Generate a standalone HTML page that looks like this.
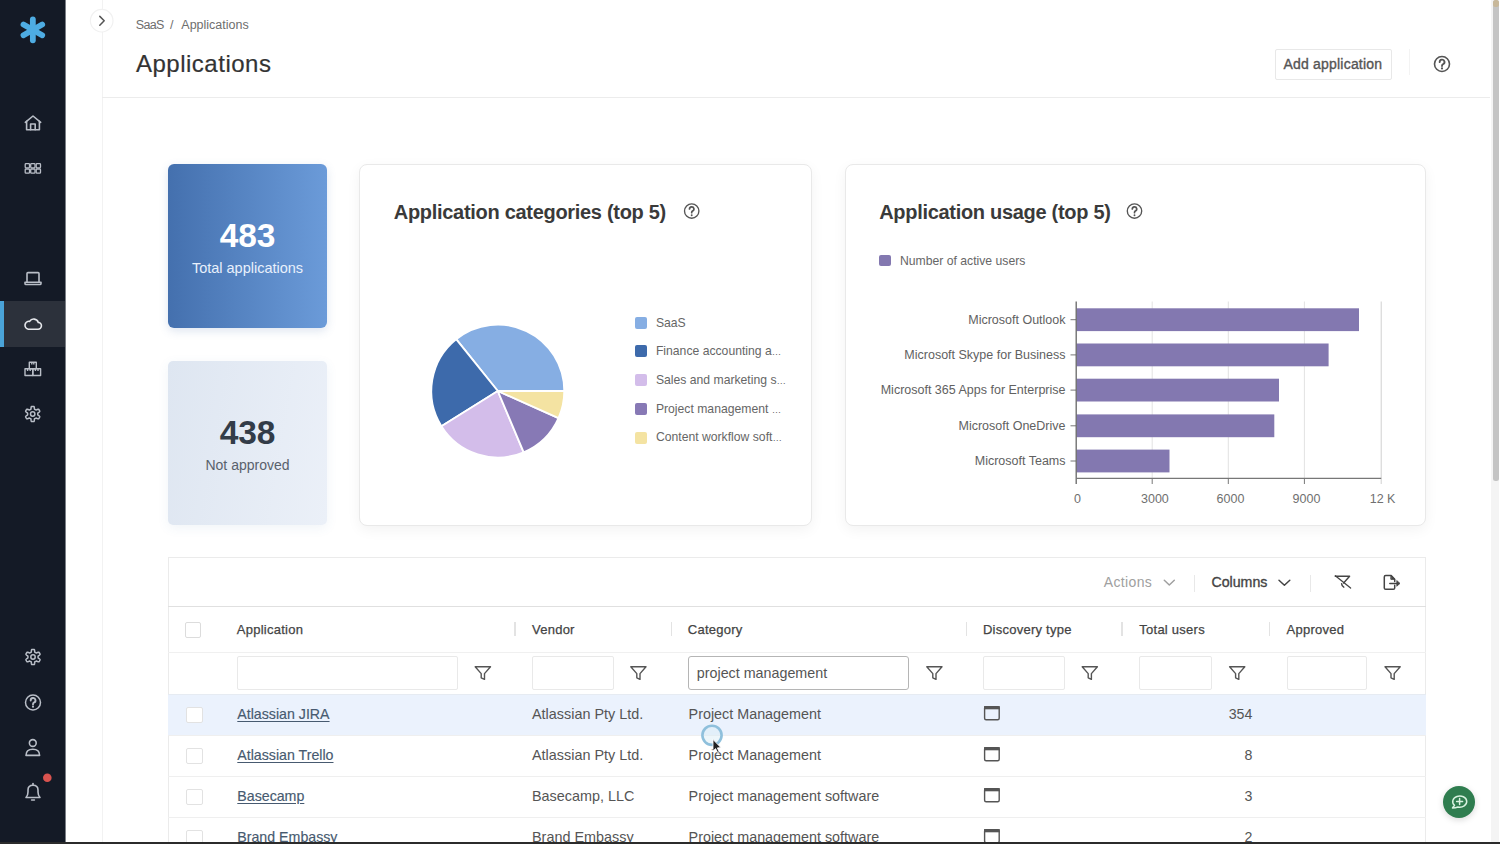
<!DOCTYPE html>
<html><head><meta charset="utf-8">
<style>
*{box-sizing:border-box;margin:0;padding:0}
html,body{width:1500px;height:844px;overflow:hidden;background:#fff;font-family:"Liberation Sans",sans-serif;color:#333}
.a{position:absolute}
.t{position:absolute;white-space:nowrap;line-height:1}
svg{position:absolute;overflow:visible}
</style></head><body>

<div class="a" style="left:0px;top:0px;width:65px;height:844px;background:#141a26"></div>
<div class="a" style="left:65px;top:0px;width:1px;height:844px;background:#7b7f86"></div>
<div class="a" style="left:0px;top:301px;width:65px;height:46px;background:#2c313b"></div>
<div class="a" style="left:0px;top:301px;width:4px;height:46px;background:#4aa3d8"></div>
<svg style="left:0;top:0" width="66" height="60"><g stroke="#4eace2" stroke-width="5.8" stroke-linecap="round"><line x1="32.85" y1="19.5" x2="32.85" y2="40.3"/><line x1="23.5" y1="24.5" x2="42.2" y2="35.3"/><line x1="23.5" y1="35.3" x2="42.2" y2="24.5"/></g></svg>
<svg style="left:0;top:100px" width="66" height="40"><g fill="none" stroke="#b9bec7" stroke-width="1.6" stroke-linejoin="round" stroke-linecap="round"><path d="M25.3 22.3 L33 16 L40.7 22.3"/><path d="M26.6 21.3 V29.8 H39.4 V21.3"/><path d="M30.6 29.8 V24 H35.2 V29.8"/></g></svg>
<svg style="left:0;top:0" width="66" height="200"><g fill="none" stroke="#b9bec7" stroke-width="1.3"><rect x="25.2" y="163.7" width="4.3" height="4.2" rx="0.8"/><rect x="30.7" y="163.7" width="4.3" height="4.2" rx="0.8"/><rect x="36.2" y="163.7" width="4.3" height="4.2" rx="0.8"/><rect x="25.2" y="169.0" width="4.3" height="4.2" rx="0.8"/><rect x="30.7" y="169.0" width="4.3" height="4.2" rx="0.8"/><rect x="36.2" y="169.0" width="4.3" height="4.2" rx="0.8"/></g></svg>
<svg style="left:0;top:0" width="66" height="300"><g fill="none" stroke="#b9bec7" stroke-width="1.6" stroke-linejoin="round" stroke-linecap="round"><path d="M27 282 V273.5 Q27 272.6 27.9 272.6 H38.1 Q39 272.6 39 273.5 V282"/><path d="M25 282.3 H41 V283.4 Q41 284.5 40 284.5 H26 Q25 284.5 25 283.4 Z"/></g></svg>
<svg style="left:0;top:0" width="66" height="340"><g fill="none" stroke="#e6e8ec" stroke-width="1.6" stroke-linejoin="round"><path d="M28.3 329.2 H37.8 A3.4 3.4 0 0 0 38.3 322.4 A4.8 4.8 0 0 0 29.6 321.4 A3.9 3.9 0 0 0 28.3 329.2 Z"/></g></svg>
<svg style="left:0;top:0" width="66" height="390"><g fill="none" stroke="#b9bec7" stroke-width="1.4" stroke-linejoin="round"><rect x="29.3" y="362.3" width="7" height="6.4"/><rect x="25" y="368.7" width="7.8" height="6.8"/><rect x="32.8" y="368.7" width="7.8" height="6.8"/><path d="M31.8 362.3 V364.5 M33.8 362.3 V364.5 M27.6 368.7 V371 M30.2 368.7 V371 M35.4 368.7 V371 M38 368.7 V371"/></g></svg>
<svg style="left:0;top:0" width="66" height="844"><g fill="none" stroke="#b9bec7" stroke-width="1.5"><polygon points="37.80,414.00 37.79,414.27 37.77,414.53 37.74,414.80 38.08,415.14 38.83,415.64 39.55,416.22 39.80,416.72 39.64,417.09 39.47,417.45 39.28,417.80 39.07,418.14 38.85,418.47 38.61,418.78 38.05,418.82 37.19,418.49 36.38,418.09 35.91,417.96 35.70,418.13 35.48,418.28 35.25,418.42 35.02,418.54 34.77,418.66 34.53,418.76 34.40,419.23 34.34,420.13 34.20,421.04 33.89,421.51 33.49,421.56 33.10,421.59 32.70,421.60 32.30,421.59 31.91,421.56 31.51,421.51 31.20,421.04 31.06,420.13 31.00,419.23 30.87,418.76 30.63,418.66 30.38,418.54 30.15,418.42 29.92,418.28 29.70,418.13 29.49,417.96 29.02,418.09 28.21,418.49 27.35,418.82 26.79,418.78 26.55,418.47 26.33,418.14 26.12,417.80 25.93,417.45 25.76,417.09 25.60,416.72 25.85,416.22 26.57,415.64 27.32,415.14 27.66,414.80 27.63,414.53 27.61,414.27 27.60,414.00 27.61,413.73 27.63,413.47 27.66,413.20 27.32,412.86 26.57,412.36 25.85,411.78 25.60,411.28 25.76,410.91 25.93,410.55 26.12,410.20 26.33,409.86 26.55,409.53 26.79,409.22 27.35,409.18 28.21,409.51 29.02,409.91 29.49,410.04 29.70,409.87 29.92,409.72 30.15,409.58 30.38,409.46 30.63,409.34 30.87,409.24 31.00,408.77 31.06,407.87 31.20,406.96 31.51,406.49 31.91,406.44 32.30,406.41 32.70,406.40 33.10,406.41 33.49,406.44 33.89,406.49 34.20,406.96 34.34,407.87 34.40,408.77 34.53,409.24 34.77,409.34 35.02,409.46 35.25,409.58 35.48,409.72 35.70,409.87 35.91,410.04 36.38,409.91 37.19,409.51 38.05,409.18 38.61,409.22 38.85,409.53 39.07,409.86 39.28,410.20 39.47,410.55 39.64,410.91 39.80,411.28 39.55,411.78 38.83,412.36 38.08,412.86 37.74,413.20 37.77,413.47 37.79,413.73" stroke-linejoin="round"/><circle cx="32.7" cy="414" r="2.2"/><polygon points="38.10,657.00 38.09,657.27 38.07,657.53 38.04,657.80 38.38,658.14 39.13,658.64 39.85,659.22 40.10,659.72 39.94,660.09 39.77,660.45 39.58,660.80 39.37,661.14 39.15,661.47 38.91,661.78 38.35,661.82 37.49,661.49 36.68,661.09 36.21,660.96 36.00,661.13 35.78,661.28 35.55,661.42 35.32,661.54 35.07,661.66 34.83,661.76 34.70,662.23 34.64,663.13 34.50,664.04 34.19,664.51 33.79,664.56 33.40,664.59 33.00,664.60 32.60,664.59 32.21,664.56 31.81,664.51 31.50,664.04 31.36,663.13 31.30,662.23 31.17,661.76 30.93,661.66 30.68,661.54 30.45,661.42 30.22,661.28 30.00,661.13 29.79,660.96 29.32,661.09 28.51,661.49 27.65,661.82 27.09,661.78 26.85,661.47 26.63,661.14 26.42,660.80 26.23,660.45 26.06,660.09 25.90,659.72 26.15,659.22 26.87,658.64 27.62,658.14 27.96,657.80 27.93,657.53 27.91,657.27 27.90,657.00 27.91,656.73 27.93,656.47 27.96,656.20 27.62,655.86 26.87,655.36 26.15,654.78 25.90,654.28 26.06,653.91 26.23,653.55 26.42,653.20 26.63,652.86 26.85,652.53 27.09,652.22 27.65,652.18 28.51,652.51 29.32,652.91 29.79,653.04 30.00,652.87 30.22,652.72 30.45,652.58 30.68,652.46 30.93,652.34 31.17,652.24 31.30,651.77 31.36,650.87 31.50,649.96 31.81,649.49 32.21,649.44 32.60,649.41 33.00,649.40 33.40,649.41 33.79,649.44 34.19,649.49 34.50,649.96 34.64,650.87 34.70,651.77 34.83,652.24 35.07,652.34 35.32,652.46 35.55,652.58 35.78,652.72 36.00,652.87 36.21,653.04 36.68,652.91 37.49,652.51 38.35,652.18 38.91,652.22 39.15,652.53 39.37,652.86 39.58,653.20 39.77,653.55 39.94,653.91 40.10,654.28 39.85,654.78 39.13,655.36 38.38,655.86 38.04,656.20 38.07,656.47 38.09,656.73" stroke-linejoin="round"/><circle cx="33" cy="657" r="2.2"/></g></svg>
<svg style="left:0;top:0" width="66" height="844"><g fill="none" stroke="#b9bec7" stroke-width="1.5" stroke-linecap="round"><circle cx="33" cy="702.5" r="7.5"/><path d="M30.7 700.5 A2.4 2.4 0 1 1 33.8 702.7 Q33 703.1 33 704.4" stroke-width="1.9"/></g><circle cx="33" cy="706.7" r="1.1" fill="#b9bec7"/></svg>
<svg style="left:0;top:0" width="66" height="844"><g fill="none" stroke="#b9bec7" stroke-width="1.6" stroke-linejoin="round"><circle cx="32.8" cy="743" r="3.4"/><path d="M26 755.4 Q26 749.3 32.8 749.3 Q39.6 749.3 39.6 755.4 Z"/></g></svg>
<svg style="left:0;top:0" width="66" height="844"><g fill="none" stroke="#b9bec7" stroke-width="1.6" stroke-linejoin="round" stroke-linecap="round"><path d="M26 797.5 H40 Q38 795.5 38 792 V790 Q38 785.3 33 785.3 Q28 785.3 28 790 V792 Q28 795.5 26 797.5 Z"/><path d="M31.6 800 H34.4"/><path d="M33 783.5 V785"/></g><circle cx="47.3" cy="777.8" r="4.3" fill="#d9534f"/></svg>
<div class="a" style="left:102px;top:0px;width:1px;height:844px;background:#f2f2f2"></div>
<div class="a" style="left:102px;top:97px;width:1388px;height:1px;background:#ececec"></div>
<div class="a" style="left:1490.5px;top:0px;width:8.5px;height:844px;background:#f4f4f4"></div>
<div class="a" style="left:1493px;top:0px;width:5.5px;height:481px;background:#c4c4c4;border-radius:2.5px"></div>
<div class="a" style="left:1493px;top:0px;width:5.5px;height:7px;background:#c8b89a;border-radius:2.5px"></div>
<svg style="left:0;top:0" width="140" height="50"><circle cx="101.7" cy="20.7" r="11.3" fill="#fff" stroke="#f1f1f1" stroke-width="1.2"/><path d="M99.8 16.4 L104.2 20.8 L99.8 25.2" fill="none" stroke="#555" stroke-width="1.5" stroke-linecap="round" stroke-linejoin="round"/></svg>
<div class="t" style="top:18.82px;font-size:12.5px;color:#6e6e6e;letter-spacing:-0.7px;left:135.8px;">SaaS</div>
<div class="t" style="top:18.82px;font-size:12.5px;color:#6e6e6e;left:170px;">/</div>
<div class="t" style="top:18.82px;font-size:12.5px;color:#6e6e6e;left:181.3px;">Applications</div>
<div class="t" style="top:52.08px;font-size:24px;color:#333;letter-spacing:0.5px;left:136px;-webkit-text-stroke:0.2px #333;">Applications</div>
<div class="a" style="left:1274.5px;top:49px;width:117.5px;height:30.5px;border:1px solid #e8e8e8;border-radius:2px;background:#fff"></div>
<div class="t" style="top:56.85px;font-size:14px;color:#555;letter-spacing:0.2px;left:1283.5px;-webkit-text-stroke:0.35px #555;">Add application</div>
<div class="a" style="left:1409px;top:49px;width:1px;height:26px;background:#f3f3f3"></div>
<svg style="left:0;top:0" width="1500" height="100"><g fill="none" stroke="#555" stroke-width="1.6" stroke-linecap="round"><circle cx="1442" cy="64" r="7.5"/><path d="M1439.7 62.1 A2.4 2.4 0 1 1 1442.8 64.3 Q1442 64.7 1442 66" stroke-width="1.9"/></g><circle cx="1442" cy="68.4" r="1.1" fill="#555"/></svg>
<div class="a" style="left:168px;top:164px;width:159px;height:164px;border-radius:6px;background:linear-gradient(90deg,#4470ae,#6b9bd9);box-shadow:0 3px 10px rgba(70,110,170,.18)"></div>
<div class="t" style="top:219.04px;font-size:33.5px;color:#ffffff;font-weight:700;letter-spacing:-0.2px;left:47.5px;width:400px;text-align:center;">483</div>
<div class="t" style="top:261.03px;font-size:14.5px;color:#e8f0fc;left:47.5px;width:400px;text-align:center;">Total applications</div>
<div class="a" style="left:168px;top:361px;width:159px;height:164px;border-radius:5px;background:linear-gradient(100deg,#dee6f1,#ebf0f8);box-shadow:0 3px 12px rgba(70,110,170,.08)"></div>
<div class="t" style="top:415.54px;font-size:33.5px;color:#333c48;font-weight:700;letter-spacing:-0.2px;left:47.5px;width:400px;text-align:center;">438</div>
<div class="t" style="top:458.15px;font-size:14px;color:#59616c;left:47.5px;width:400px;text-align:center;">Not approved</div>
<div class="a" style="left:359px;top:164px;width:453px;height:362px;background:#fff;border:1px solid #e9e9e9;border-radius:8px;box-shadow:0 4px 14px rgba(0,0,0,.05)"></div>
<div class="a" style="left:845px;top:164px;width:581px;height:362px;background:#fff;border:1px solid #e9e9e9;border-radius:8px;box-shadow:0 4px 14px rgba(0,0,0,.05)"></div>
<div class="t" style="top:201.87px;font-size:20px;color:#3a3a3a;font-weight:700;letter-spacing:-0.3px;left:393.8px;">Application categories (top 5)</div>
<svg style="left:0;top:0" width="1500" height="844"><g fill="none" stroke="#555" stroke-width="1.35" stroke-linecap="round"><circle cx="691.7" cy="211" r="7.2"/><path d="M689.5 209 A2.2 2.2 0 1 1 692.4000000000001 211.1 Q691.7 211.5 691.7 212.7" stroke-width="1.7"/></g><circle cx="691.7" cy="215.3" r="0.95" fill="#555"/></svg>
<div class="t" style="top:201.87px;font-size:20px;color:#3a3a3a;font-weight:700;letter-spacing:-0.3px;left:879.2px;">Application usage (top 5)</div>
<svg style="left:0;top:0" width="1500" height="844"><g fill="none" stroke="#555" stroke-width="1.35" stroke-linecap="round"><circle cx="1134.5" cy="211" r="7.2"/><path d="M1132.3 209 A2.2 2.2 0 1 1 1135.2 211.1 Q1134.5 211.5 1134.5 212.7" stroke-width="1.7"/></g><circle cx="1134.5" cy="215.3" r="0.95" fill="#555"/></svg>
<svg style="left:0;top:0" width="1500" height="844"><path d="M497.8 391 L564.30 391.00 A66.5 66.5 0 0 0 456.13 339.17 Z" fill="#86aee3" stroke="#fff" stroke-width="1.9" stroke-linejoin="round"/><path d="M497.8 391 L456.13 339.17 A66.5 66.5 0 0 0 441.40 426.24 Z" fill="#3d6aab" stroke="#fff" stroke-width="1.9" stroke-linejoin="round"/><path d="M497.8 391 L441.40 426.24 A66.5 66.5 0 0 0 523.68 452.26 Z" fill="#d3bdea" stroke="#fff" stroke-width="1.9" stroke-linejoin="round"/><path d="M497.8 391 L523.68 452.26 A66.5 66.5 0 0 0 558.55 418.05 Z" fill="#8779b5" stroke="#fff" stroke-width="1.9" stroke-linejoin="round"/><path d="M497.8 391 L558.55 418.05 A66.5 66.5 0 0 0 564.30 391.00 Z" fill="#f4e3a2" stroke="#fff" stroke-width="1.9" stroke-linejoin="round"/></svg>
<div class="a" style="left:635.3px;top:316.7px;width:12px;height:12px;background:#86aee3;border-radius:2px"></div>
<div class="t" style="top:316.67px;font-size:12.2px;color:#666;left:655.9px;">SaaS</div>
<div class="a" style="left:635.3px;top:345.4px;width:12px;height:12px;background:#3d6aab;border-radius:2px"></div>
<div class="t" style="top:345.37px;font-size:12.2px;color:#666;left:655.9px;">Finance accounting a<span style="font-size:9.5px">…</span></div>
<div class="a" style="left:635.3px;top:374.09999999999997px;width:12px;height:12px;background:#d3bdea;border-radius:2px"></div>
<div class="t" style="top:374.07px;font-size:12.2px;color:#666;left:655.9px;">Sales and marketing s<span style="font-size:9.5px">…</span></div>
<div class="a" style="left:635.3px;top:402.8px;width:12px;height:12px;background:#8779b5;border-radius:2px"></div>
<div class="t" style="top:402.77px;font-size:12.2px;color:#666;left:655.9px;">Project management <span style="font-size:9.5px">…</span></div>
<div class="a" style="left:635.3px;top:431.5px;width:12px;height:12px;background:#f4e3a2;border-radius:2px"></div>
<div class="t" style="top:431.47px;font-size:12.2px;color:#666;left:655.9px;">Content workflow soft<span style="font-size:9.5px">…</span></div>
<div class="a" style="left:879px;top:255.3px;width:12px;height:11.2px;background:#8378b0;border-radius:2px"></div>
<div class="t" style="top:254.87px;font-size:12.2px;color:#666;left:900px;">Number of active users</div>
<svg style="left:0;top:0" width="1500" height="844"><line x1="1152.2" y1="301.5" x2="1152.2" y2="478.3" stroke="#e2e2e2" stroke-width="1"/><line x1="1228.3" y1="301.5" x2="1228.3" y2="478.3" stroke="#e2e2e2" stroke-width="1"/><line x1="1304.4" y1="301.5" x2="1304.4" y2="478.3" stroke="#e2e2e2" stroke-width="1"/><line x1="1381.2" y1="301.5" x2="1381.2" y2="484" stroke="#d0d0d0" stroke-width="1"/><rect x="1076.5" y="308.3" width="282.5" height="22.8" fill="#8378b0"/><line x1="1070.5" y1="319.7" x2="1076" y2="319.7" stroke="#777" stroke-width="1"/><rect x="1076.5" y="343.5" width="252.1" height="22.8" fill="#8378b0"/><line x1="1070.5" y1="354.9" x2="1076" y2="354.9" stroke="#777" stroke-width="1"/><rect x="1076.5" y="378.7" width="202.5" height="22.8" fill="#8378b0"/><line x1="1070.5" y1="390.1" x2="1076" y2="390.1" stroke="#777" stroke-width="1"/><rect x="1076.5" y="414.4" width="197.8" height="22.8" fill="#8378b0"/><line x1="1070.5" y1="425.8" x2="1076" y2="425.8" stroke="#777" stroke-width="1"/><rect x="1076.5" y="449.6" width="93.0" height="22.8" fill="#8378b0"/><line x1="1070.5" y1="461.0" x2="1076" y2="461.0" stroke="#777" stroke-width="1"/><line x1="1076.2" y1="301.5" x2="1076.2" y2="484" stroke="#666" stroke-width="1.3"/><line x1="1076.2" y1="478.3" x2="1381.2" y2="478.3" stroke="#777" stroke-width="1.3"/><line x1="1152.2" y1="478.3" x2="1152.2" y2="484" stroke="#777" stroke-width="1"/><line x1="1228.3" y1="478.3" x2="1228.3" y2="484" stroke="#777" stroke-width="1"/><line x1="1304.4" y1="478.3" x2="1304.4" y2="484" stroke="#777" stroke-width="1"/></svg>
<div class="t" style="top:313.52px;font-size:12.5px;color:#616161;right:434.5px;text-align:right;">Microsoft Outlook</div>
<div class="t" style="top:348.72px;font-size:12.5px;color:#616161;right:434.5px;text-align:right;">Microsoft Skype for Business</div>
<div class="t" style="top:383.92px;font-size:12.5px;color:#616161;right:434.5px;text-align:right;">Microsoft 365 Apps for Enterprise</div>
<div class="t" style="top:419.62px;font-size:12.5px;color:#616161;right:434.5px;text-align:right;">Microsoft OneDrive</div>
<div class="t" style="top:454.82px;font-size:12.5px;color:#616161;right:434.5px;text-align:right;">Microsoft Teams</div>
<div class="t" style="top:493.22px;font-size:12.5px;color:#707070;left:877.5px;width:400px;text-align:center;">0</div>
<div class="t" style="top:493.22px;font-size:12.5px;color:#707070;left:954.9000000000001px;width:400px;text-align:center;">3000</div>
<div class="t" style="top:493.22px;font-size:12.5px;color:#707070;left:1030.5px;width:400px;text-align:center;">6000</div>
<div class="t" style="top:493.22px;font-size:12.5px;color:#707070;left:1106.5px;width:400px;text-align:center;">9000</div>
<div class="t" style="top:493.22px;font-size:12.5px;color:#707070;left:1182.6px;width:400px;text-align:center;">12 K</div>
<div class="a" style="left:168px;top:557px;width:1258px;height:300px;border:1px solid #ebebeb;background:#fff"></div>
<div class="t" style="top:574.95px;font-size:14px;color:#a0a0a0;letter-spacing:0.35px;left:1103.8px;">Actions</div>
<svg style="left:0;top:0" width="1500" height="844"><g fill="none" stroke-width="1.5" stroke-linecap="round" stroke-linejoin="round"><path d="M1164.3 580.3 L1169.3 585 L1174.3 580.3" stroke="#a0a0a0"/><path d="M1279 580.3 L1284.4 585.3 L1289.8 580.3" stroke="#444"/><path d="M1335.3 576.2 H1349.6 L1343.6 583" stroke="#444" stroke-width="1.4"/><path d="M1341.6 583.6 Q1341.8 586.2 1343.8 587.2" stroke="#444" stroke-width="1.4"/><path d="M1335.3 575.8 L1350.6 588" stroke="#444" stroke-width="1.3"/><path d="M1394.7 581.5 V579.3 L1391.2 575.6 H1385.7 Q1384.3 575.6 1384.3 577 V587.9 Q1384.3 589.3 1385.7 589.3 H1393.3 Q1394.7 589.3 1394.7 587.9 V585.3" stroke="#444" stroke-width="1.5"/><path d="M1391.2 575.8 L1394.6 579.3 H1391.2 Z" fill="#444" stroke="#444" stroke-width="1"/><path d="M1389.8 583.4 H1397.5" stroke="#444" stroke-width="1.5"/><path d="M1397 580.8 L1400 583.4 L1397 586 Z" fill="#444" stroke="#444" stroke-width="0.8"/></g></svg>
<div class="a" style="left:1194px;top:575px;width:1px;height:16.5px;background:#e8e8e8"></div>
<div class="t" style="top:574.78px;font-size:14.2px;color:#444;left:1211.4px;-webkit-text-stroke:0.35px #444;">Columns</div>
<div class="a" style="left:1309.8px;top:575px;width:1px;height:16.5px;background:#e8e8e8"></div>
<div class="a" style="left:168px;top:606px;width:1258px;height:1.3px;background:#e0e0e0"></div>
<div class="a" style="left:185px;top:622px;width:16px;height:16px;border:1px solid #dcdcdc;border-radius:2px"></div>
<div class="t" style="top:623.10px;font-size:13px;color:#444;letter-spacing:0.25px;left:236.8px;-webkit-text-stroke:0.25px #444;">Application</div>
<div class="t" style="top:623.10px;font-size:13px;color:#444;letter-spacing:0.25px;left:532px;-webkit-text-stroke:0.25px #444;">Vendor</div>
<div class="t" style="top:623.10px;font-size:13px;color:#444;letter-spacing:0.25px;left:687.8px;-webkit-text-stroke:0.25px #444;">Category</div>
<div class="t" style="top:623.10px;font-size:13px;color:#444;letter-spacing:0.25px;left:982.9px;-webkit-text-stroke:0.25px #444;">Discovery type</div>
<div class="t" style="top:623.10px;font-size:13px;color:#444;letter-spacing:0.25px;left:1139.3px;-webkit-text-stroke:0.25px #444;">Total users</div>
<div class="t" style="top:623.10px;font-size:13px;color:#444;letter-spacing:0.25px;left:1286.6px;-webkit-text-stroke:0.25px #444;">Approved</div>
<div class="a" style="left:514.4px;top:622px;width:1.5px;height:14px;background:#e3e3e3"></div>
<div class="a" style="left:670.6px;top:622px;width:1.5px;height:14px;background:#e3e3e3"></div>
<div class="a" style="left:965.6px;top:622px;width:1.5px;height:14px;background:#e3e3e3"></div>
<div class="a" style="left:1121.4px;top:622px;width:1.5px;height:14px;background:#e3e3e3"></div>
<div class="a" style="left:1268.8px;top:622px;width:1.5px;height:14px;background:#e3e3e3"></div>
<div class="a" style="left:168px;top:651.5px;width:1258px;height:1px;background:#f0f0f0"></div>
<div class="a" style="left:236.8px;top:656.2px;width:221.0px;height:33.6px;border:1px solid #e9e9e9;border-radius:2px;background:#fff"></div>
<div class="a" style="left:532px;top:656.2px;width:81.60000000000002px;height:33.6px;border:1px solid #e9e9e9;border-radius:2px;background:#fff"></div>
<div class="a" style="left:687.8px;top:656.2px;width:221.20000000000005px;height:33.6px;border:1px solid #b5b5b5;border-radius:3px;background:#fff"></div>
<div class="a" style="left:982.9px;top:656.2px;width:82.10000000000002px;height:33.6px;border:1px solid #e9e9e9;border-radius:2px;background:#fff"></div>
<div class="a" style="left:1139.3px;top:656.2px;width:72.40000000000009px;height:33.6px;border:1px solid #e9e9e9;border-radius:2px;background:#fff"></div>
<div class="a" style="left:1286.6px;top:656.2px;width:80.90000000000009px;height:33.6px;border:1px solid #e9e9e9;border-radius:2px;background:#fff"></div>
<svg style="left:0;top:0" width="1500" height="844"><g fill="none" stroke="#555" stroke-width="1.4" stroke-linejoin="round"><path d="M475.2 666.8 H490.5 L484.5 673.6 V679.4 L481.2 677.8 V673.6 Z"/><path d="M630.8 666.8 H646.0 L640.0 673.6 V679.4 L636.8 677.8 V673.6 Z"/><path d="M926.8 666.8 H942.0 L936.0 673.6 V679.4 L932.8 677.8 V673.6 Z"/><path d="M1082.2 666.8 H1097.4 L1091.4 673.6 V679.4 L1088.2 677.8 V673.6 Z"/><path d="M1229.6 666.8 H1244.8 L1238.8 673.6 V679.4 L1235.6 677.8 V673.6 Z"/><path d="M1385.0 666.8 H1400.2 L1394.2 673.6 V679.4 L1391.0 677.8 V673.6 Z"/></g></svg>
<div class="t" style="top:665.70px;font-size:14.3px;color:#555;left:696.8px;">project management</div>
<div class="a" style="left:168px;top:694px;width:1258px;height:41px;background:#ebf2fd;border-top:1px solid #e6ebf2"></div>
<div class="a" style="left:168px;top:735.3px;width:1258px;height:1px;background:#efefef"></div>
<div class="a" style="left:168px;top:776px;width:1258px;height:1px;background:#efefef"></div>
<div class="a" style="left:168px;top:816.6px;width:1258px;height:1px;background:#efefef"></div>
<div class="a" style="left:186px;top:706.5px;width:16.5px;height:16.5px;border:1px solid #e2e2e2;border-radius:2px;background:#fff"></div>
<div class="t" style="top:706.98px;font-size:14.2px;color:#475a70;left:237.3px;text-decoration:underline;text-underline-offset:2px;-webkit-text-stroke:0.15px #475a70;">Atlassian JIRA</div>
<div class="t" style="top:706.81px;font-size:14.4px;color:#555;left:532px;">Atlassian Pty Ltd.</div>
<div class="t" style="top:706.85px;font-size:14.35px;color:#555;left:688.6px;">Project Management</div>
<div class="t" style="top:706.98px;font-size:14.2px;color:#555;right:247.70000000000005px;text-align:right;">354</div>
<div class="a" style="left:186px;top:747.5px;width:16.5px;height:16.5px;border:1px solid #e2e2e2;border-radius:2px;background:#fff"></div>
<div class="t" style="top:747.98px;font-size:14.2px;color:#475a70;left:237.3px;text-decoration:underline;text-underline-offset:2px;-webkit-text-stroke:0.15px #475a70;">Atlassian Trello</div>
<div class="t" style="top:747.81px;font-size:14.4px;color:#555;left:532px;">Atlassian Pty Ltd.</div>
<div class="t" style="top:747.85px;font-size:14.35px;color:#555;left:688.6px;">Project Management</div>
<div class="t" style="top:747.98px;font-size:14.2px;color:#555;right:247.70000000000005px;text-align:right;">8</div>
<div class="a" style="left:186px;top:788.5px;width:16.5px;height:16.5px;border:1px solid #e2e2e2;border-radius:2px;background:#fff"></div>
<div class="t" style="top:788.98px;font-size:14.2px;color:#475a70;left:237.3px;text-decoration:underline;text-underline-offset:2px;-webkit-text-stroke:0.15px #475a70;">Basecamp</div>
<div class="t" style="top:788.81px;font-size:14.4px;color:#555;left:532px;">Basecamp, LLC</div>
<div class="t" style="top:788.85px;font-size:14.35px;color:#555;left:688.6px;">Project management software</div>
<div class="t" style="top:788.98px;font-size:14.2px;color:#555;right:247.70000000000005px;text-align:right;">3</div>
<div class="a" style="left:186px;top:829.5px;width:16.5px;height:16.5px;border:1px solid #e2e2e2;border-radius:2px;background:#fff"></div>
<div class="t" style="top:829.98px;font-size:14.2px;color:#475a70;left:237.3px;text-decoration:underline;text-underline-offset:2px;-webkit-text-stroke:0.15px #475a70;">Brand Embassy</div>
<div class="t" style="top:829.81px;font-size:14.4px;color:#555;left:532px;">Brand Embassy</div>
<div class="t" style="top:829.85px;font-size:14.35px;color:#555;left:688.6px;">Project management software</div>
<div class="t" style="top:829.98px;font-size:14.2px;color:#555;right:247.70000000000005px;text-align:right;">2</div>
<svg style="left:0;top:0" width="1500" height="844"><rect x="984.6" y="706.8" width="14.6" height="13" rx="1.5" fill="none" stroke="#555" stroke-width="1.4"/><rect x="984" y="706.1" width="15.8" height="3.2" fill="#555"/><rect x="984.6" y="747.8" width="14.6" height="13" rx="1.5" fill="none" stroke="#555" stroke-width="1.4"/><rect x="984" y="747.1" width="15.8" height="3.2" fill="#555"/><rect x="984.6" y="788.8" width="14.6" height="13" rx="1.5" fill="none" stroke="#555" stroke-width="1.4"/><rect x="984" y="788.1" width="15.8" height="3.2" fill="#555"/><rect x="984.6" y="829.8" width="14.6" height="13" rx="1.5" fill="none" stroke="#555" stroke-width="1.4"/><rect x="984" y="829.1" width="15.8" height="3.2" fill="#555"/></svg>
<svg style="left:0;top:0" width="1500" height="844"><circle cx="712" cy="735.3" r="9.6" fill="rgba(215,235,245,.45)" stroke="#8fc0dc" stroke-width="2.6"/><path d="M713 739.5 L713 751 L715.6 748.6 L717.6 752.6 L719.2 751.8 L717.3 747.9 L720.8 747.6 Z" fill="#222" stroke="#fff" stroke-width="0.8"/></svg>
<svg style="left:0;top:0" width="1500" height="844"><circle cx="1459" cy="802" r="16" fill="#2f7d4f" style="filter:drop-shadow(0 2px 3px rgba(0,0,0,.15))"/><g fill="none" stroke="#d8f3e0" stroke-width="1.5" stroke-linejoin="round" stroke-linecap="round"><path d="M1452.5 808 L1454.5 805.3 A7 5.6 0 1 1 1458 807 Q1455.5 808 1452.5 808 Z"/><path d="M1459.6 798.5 V804.5 M1456.6 801.5 H1462.6"/></g></svg>
<div class="a" style="left:0px;top:842px;width:1500px;height:2px;background:#2b2b2b"></div>
</body></html>
